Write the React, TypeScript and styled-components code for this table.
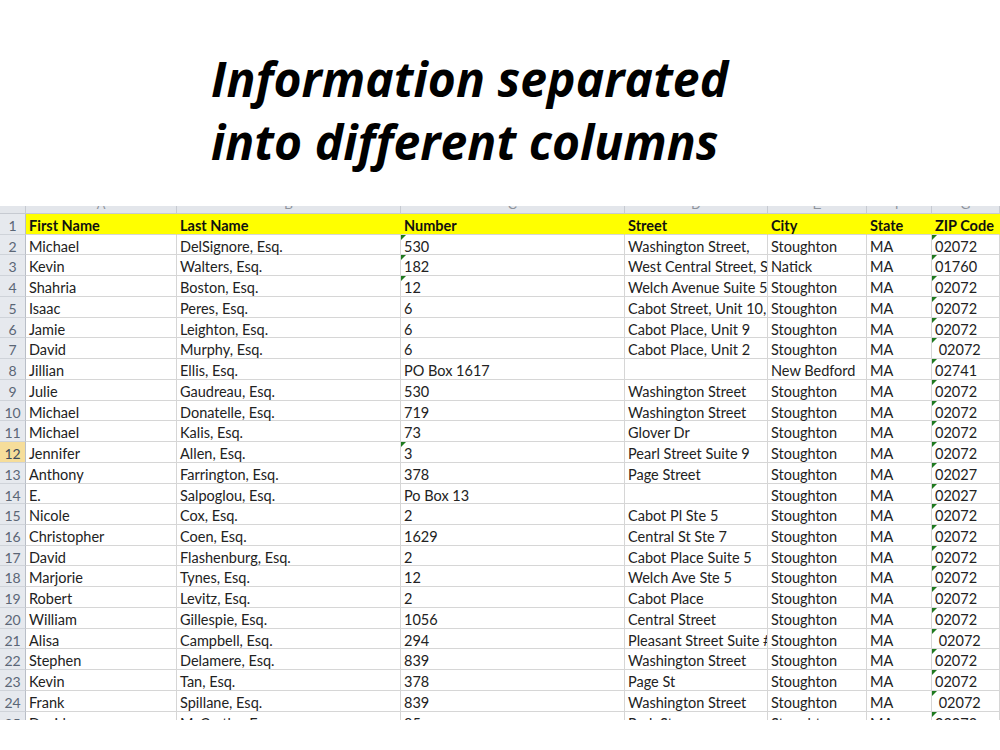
import React from "react";
import styled, { createGlobalStyle, css } from "styled-components";

const GlobalStyle = createGlobalStyle`
  html, body { margin: 0; padding: 0; background: #ffffff; }
  body { font-family: "Lato", "Liberation Sans", sans-serif; }
`;

const COLS = "26px 151px 224px 224px 143px 99px 65px 1fr";
const ROW_H = "20.74px";

const Page = styled.div`
  width: 1000px;
  height: 750px;
  overflow: hidden;
  background: #ffffff;
`;

const Title = styled.h1`
  margin: 0;
  padding: 47px 0 33px 211px;
  font-family: "Open Sans", "Noto Sans", sans-serif;
  font-style: italic;
  font-weight: 700;
  font-size: 48px;
  line-height: 63px;
  color: #000000;
  letter-spacing: 0.05px;
`;

const Sheet = styled.div`
  height: 514px;
  overflow: hidden;
  font-family: "Lato", "Liberation Sans", sans-serif;
  font-size: 14.5px;
  color: #222222;
`;

const HeaderStrip = styled.div`
  display: grid;
  grid-template-columns: ${COLS};
  grid-template-rows: 7px;
  height: 8px;
  background: #e3e6eb;
  border-bottom: 1px solid #c6cad1;
  box-sizing: border-box;
  overflow: hidden;
`;

const ColLetter = styled.div`
  display: flex;
  align-items: flex-end;
  justify-content: center;
  border-right: 1px solid #c6cad1;
  color: #8d939c;
  font-family: "Liberation Sans", sans-serif;
  font-size: 13px;
  line-height: 13px;
  overflow: hidden;
  & > span {
    display: block;
    margin-bottom: 2px;
  }
`;

const Row = styled.div<{ $head?: boolean }>`
  display: grid;
  grid-template-columns: ${COLS};
  grid-template-rows: ${ROW_H};
  height: ${ROW_H};
  ${(p) =>
    p.$head &&
    css`
      font-weight: 700;
      color: #111111;
    `}
`;

const RowNum = styled.div<{ $sel?: boolean }>`
  box-sizing: border-box;
  min-height: 0;
  text-align: center;
  line-height: 24px;
  background: ${(p) => (p.$sel ? "#f6dd9a" : "#e6e9ee")};
  border-right: 1px solid #b9bec7;
  border-bottom: 1px solid #cfd3d9;
  color: ${(p) => (p.$sel ? "#3e4a5a" : "#5b6676")};
  font-size: 14px;
  font-weight: 400;
  overflow-x: clip;
  overflow-y: visible;
`;

const Cell = styled.div<{ $fill?: boolean; $flag?: boolean }>`
  position: relative;
  box-sizing: border-box;
  min-height: 0;
  padding-left: 3px;
  line-height: 24px;
  white-space: pre;
  overflow-x: clip;
  overflow-y: visible;
  border-bottom: 1px solid #d6d6d6;
  border-right: 1px solid ${(p) => (p.$fill ? "#ffff00" : "#d6d6d6")};
  background: ${(p) => (p.$fill ? "#ffff00" : "#ffffff")};
  ${(p) =>
    p.$flag &&
    css`
      &::before {
        content: "";
        position: absolute;
        top: 0;
        left: 0;
        width: 0;
        height: 0;
        border-top: 5px solid #1f7a1f;
        border-right: 5px solid transparent;
      }
    `}
`;

type R = [string, string, string, string, string, string, string, boolean?];

const data: R[] = [
  ["Michael", "DelSignore, Esq.", "530", "Washington Street,", "Stoughton", "MA", "02072", true],
  ["Kevin", "Walters, Esq.", "182", "West Central Street, Suite 3", "Natick", "MA", "01760", true],
  ["Shahria", "Boston, Esq.", "12", "Welch Avenue Suite 5", "Stoughton", "MA", "02072", true],
  ["Isaac", "Peres, Esq.", "6", "Cabot Street, Unit 10, ", "Stoughton", "MA", "02072"],
  ["Jamie", "Leighton, Esq.", "6", "Cabot Place, Unit 9", "Stoughton", "MA", "02072"],
  ["David", "Murphy, Esq.", "6", "Cabot Place, Unit 2", "Stoughton", "MA", " 02072"],
  ["Jillian", "Ellis, Esq.", "PO Box 1617", "", "New Bedford", "MA", "02741"],
  ["Julie", "Gaudreau, Esq.", "530", "Washington Street", "Stoughton", "MA", "02072"],
  ["Michael", "Donatelle, Esq.", "719", "Washington Street", "Stoughton", "MA", "02072"],
  ["Michael", "Kalis, Esq.", "73", "Glover Dr", "Stoughton", "MA", "02072"],
  ["Jennifer", "Allen, Esq.", "3", "Pearl Street Suite 9", "Stoughton", "MA", "02072", true],
  ["Anthony", "Farrington, Esq.", "378", "Page Street", "Stoughton", "MA", "02027"],
  ["E.", "Salpoglou, Esq.", "Po Box 13", "", "Stoughton", "MA", "02027"],
  ["Nicole", "Cox, Esq.", "2", "Cabot Pl Ste 5", "Stoughton", "MA", "02072"],
  ["Christopher", "Coen, Esq.", "1629", "Central St Ste 7", "Stoughton", "MA", "02072"],
  ["David", "Flashenburg, Esq.", "2", "Cabot Place Suite 5", "Stoughton", "MA", "02072"],
  ["Marjorie", "Tynes, Esq.", "12", "Welch Ave Ste 5", "Stoughton", "MA", "02072"],
  ["Robert", "Levitz, Esq.", "2", "Cabot Place", "Stoughton", "MA", "02072"],
  ["William", "Gillespie, Esq.", "1056", "Central Street", "Stoughton", "MA", "02072"],
  ["Alisa", "Campbell, Esq.", "294", "Pleasant Street Suite #5", "Stoughton", "MA", " 02072"],
  ["Stephen", "Delamere, Esq.", "839", "Washington Street", "Stoughton", "MA", "02072"],
  ["Kevin", "Tan, Esq.", "378", "Page St", "Stoughton", "MA", "02072"],
  ["Frank", "Spillane, Esq.", "839", "Washington Street", "Stoughton", "MA", " 02072"],
  ["David", "McCarthy, Esq.", "85", "Park St", "Stoughton", "MA", "02072"],
];

const headers = ["First Name", "Last Name", "Number", "Street", "City", "State", "ZIP Code"];
const letters = ["A", "B", "C", "D", "E", "F", "G"];

export default function App() {
  return (
    <Page>
      <GlobalStyle />
      <Title>
        Information separated
        <br />
        into different columns
      </Title>
      <Sheet>
        <HeaderStrip>
          <ColLetter />
          {letters.map((l) => (
            <ColLetter key={l}>
              <span>{l}</span>
            </ColLetter>
          ))}
        </HeaderStrip>
        <Row $head>
          <RowNum>1</RowNum>
          {headers.map((h) => (
            <Cell key={h} $fill>
              {h}
            </Cell>
          ))}
        </Row>
        {data.map((r, i) => {
          const n = i + 2;
          return (
            <Row key={n}>
              <RowNum $sel={n === 12}>{n}</RowNum>
              <Cell>{r[0]}</Cell>
              <Cell>{r[1]}</Cell>
              <Cell $flag={r[7]}>{r[2]}</Cell>
              <Cell>{r[3]}</Cell>
              <Cell>{r[4]}</Cell>
              <Cell>{r[5]}</Cell>
              <Cell $flag>{r[6]}</Cell>
            </Row>
          );
        })}
      </Sheet>
    </Page>
  );
}
